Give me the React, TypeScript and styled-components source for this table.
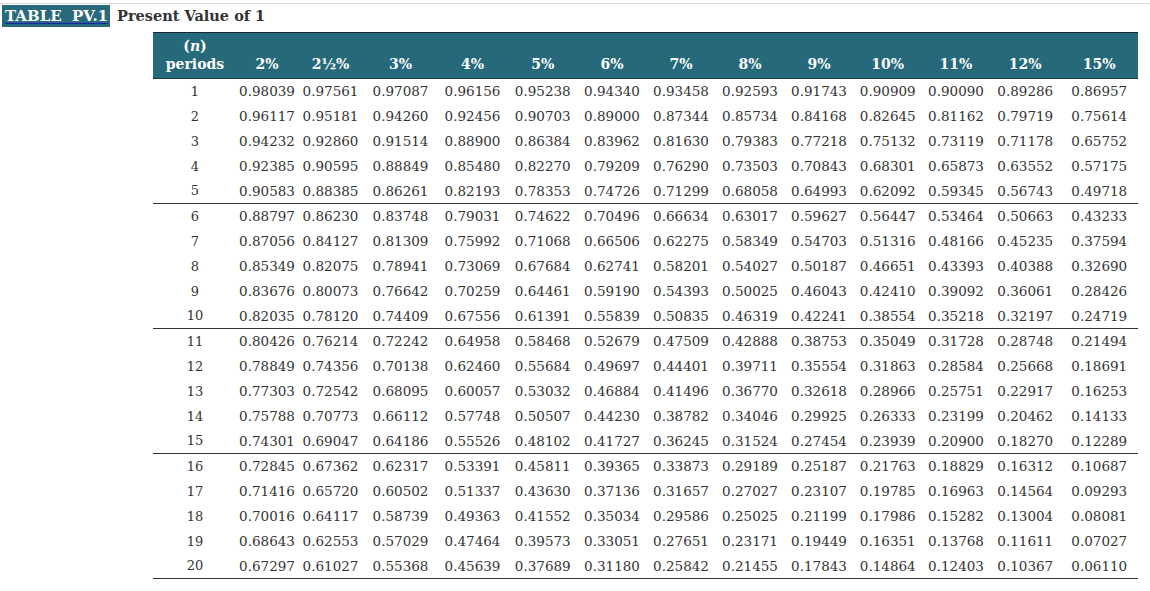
import React from 'react';
import styled, { createGlobalStyle } from 'styled-components';

const GlobalStyle = createGlobalStyle`
  html, body {
    margin: 0;
    padding: 0;
    background: #ffffff;
  }
  body {
    font-family: Georgia, "DejaVu Serif", serif;
    color: #333333;
  }
`;

const rates = ['2%', '2½%', '3%', '4%', '5%', '6%', '7%', '8%', '9%', '10%', '11%', '12%', '15%'];

// widths measured from the table, periods column first
const colWidths = [84, 60, 67, 73, 71, 69.5, 69, 69, 69, 69, 68.5, 68, 70.5, 77.5];

const rows = [
  '0.98039 0.97561 0.97087 0.96156 0.95238 0.94340 0.93458 0.92593 0.91743 0.90909 0.90090 0.89286 0.86957',
  '0.96117 0.95181 0.94260 0.92456 0.90703 0.89000 0.87344 0.85734 0.84168 0.82645 0.81162 0.79719 0.75614',
  '0.94232 0.92860 0.91514 0.88900 0.86384 0.83962 0.81630 0.79383 0.77218 0.75132 0.73119 0.71178 0.65752',
  '0.92385 0.90595 0.88849 0.85480 0.82270 0.79209 0.76290 0.73503 0.70843 0.68301 0.65873 0.63552 0.57175',
  '0.90583 0.88385 0.86261 0.82193 0.78353 0.74726 0.71299 0.68058 0.64993 0.62092 0.59345 0.56743 0.49718',
  '0.88797 0.86230 0.83748 0.79031 0.74622 0.70496 0.66634 0.63017 0.59627 0.56447 0.53464 0.50663 0.43233',
  '0.87056 0.84127 0.81309 0.75992 0.71068 0.66506 0.62275 0.58349 0.54703 0.51316 0.48166 0.45235 0.37594',
  '0.85349 0.82075 0.78941 0.73069 0.67684 0.62741 0.58201 0.54027 0.50187 0.46651 0.43393 0.40388 0.32690',
  '0.83676 0.80073 0.76642 0.70259 0.64461 0.59190 0.54393 0.50025 0.46043 0.42410 0.39092 0.36061 0.28426',
  '0.82035 0.78120 0.74409 0.67556 0.61391 0.55839 0.50835 0.46319 0.42241 0.38554 0.35218 0.32197 0.24719',
  '0.80426 0.76214 0.72242 0.64958 0.58468 0.52679 0.47509 0.42888 0.38753 0.35049 0.31728 0.28748 0.21494',
  '0.78849 0.74356 0.70138 0.62460 0.55684 0.49697 0.44401 0.39711 0.35554 0.31863 0.28584 0.25668 0.18691',
  '0.77303 0.72542 0.68095 0.60057 0.53032 0.46884 0.41496 0.36770 0.32618 0.28966 0.25751 0.22917 0.16253',
  '0.75788 0.70773 0.66112 0.57748 0.50507 0.44230 0.38782 0.34046 0.29925 0.26333 0.23199 0.20462 0.14133',
  '0.74301 0.69047 0.64186 0.55526 0.48102 0.41727 0.36245 0.31524 0.27454 0.23939 0.20900 0.18270 0.12289',
  '0.72845 0.67362 0.62317 0.53391 0.45811 0.39365 0.33873 0.29189 0.25187 0.21763 0.18829 0.16312 0.10687',
  '0.71416 0.65720 0.60502 0.51337 0.43630 0.37136 0.31657 0.27027 0.23107 0.19785 0.16963 0.14564 0.09293',
  '0.70016 0.64117 0.58739 0.49363 0.41552 0.35034 0.29586 0.25025 0.21199 0.17986 0.15282 0.13004 0.08081',
  '0.68643 0.62553 0.57029 0.47464 0.39573 0.33051 0.27651 0.23171 0.19449 0.16351 0.13768 0.11611 0.07027',
  '0.67297 0.61027 0.55368 0.45639 0.37689 0.31180 0.25842 0.21455 0.17843 0.14864 0.12403 0.10367 0.06110',
].map((r) => r.split(' '));

const Page = styled.div`
  padding-top: 3px;
`;

const TitleBar = styled.div`
  display: flex;
  align-items: center;
  gap: 7px;
  border-top: 1px solid #dcdcdc;
  padding-left: 2px;
  height: 23px;
`;

const Badge = styled.a`
  display: block;
  background: #29697c;
  color: #ffffff;
  font-weight: bold;
  font-size: 15px;
  line-height: 22px;
  padding: 0 2px 0 3px;
  text-decoration: underline;
  text-decoration-color: #1b22b0;
  text-underline-offset: 2px;
  white-space: pre;
`;

const Heading = styled.h1`
  margin: 0;
  font-size: 14.5px;
  font-weight: bold;
  color: #333333;
`;

const Table = styled.table`
  margin: 5px 0 0 153px;
  width: 985px;
  border-collapse: collapse;
  table-layout: fixed;
  font-variant-numeric: oldstyle-nums;
`;

const HeadRow = styled.tr`
  background: #25697a;
  border-top: 1px solid #0f2a30;
  border-bottom: 1px solid #163f49;
`;

const HeadCell = styled.th`
  color: #ffffff;
  font-size: 14px;
  font-weight: bold;
  text-align: center;
  vertical-align: bottom;
  padding: 4px 0 5px;
  line-height: 18px;
  height: 36px;
`;

const Row = styled.tr<{ $groupEnd: boolean }>`
  height: 25px;
  border-bottom: ${(p) => (p.$groupEnd ? '1px solid #333333' : 'none')};
`;

const Cell = styled.td<{ $period?: boolean }>`
  text-align: center;
  font-size: ${(p) => (p.$period ? '13px' : '13.5px')};
  color: #333333;
  padding: 0;
  white-space: nowrap;
`;

const App: React.FC = () => {
  return (
    <Page>
      <GlobalStyle />
      <TitleBar>
        <Badge href="#pv1">TABLE  PV.1</Badge>
        <Heading>Present Value of 1</Heading>
      </TitleBar>
      <Table>
        <colgroup>
          {colWidths.map((w, i) => (
            <col key={i} style={{ width: w }} />
          ))}
        </colgroup>
        <thead>
          <HeadRow>
            <HeadCell>
              (<i>n</i>)
              <br />
              periods
            </HeadCell>
            {rates.map((r) => (
              <HeadCell key={r}>{r}</HeadCell>
            ))}
          </HeadRow>
        </thead>
        <tbody>
          {rows.map((values, i) => (
            <Row key={i} $groupEnd={(i + 1) % 5 === 0}>
              <Cell $period>{i + 1}</Cell>
              {values.map((v, j) => (
                <Cell key={j}>{v}</Cell>
              ))}
            </Row>
          ))}
        </tbody>
      </Table>
    </Page>
  );
};

export default App;
